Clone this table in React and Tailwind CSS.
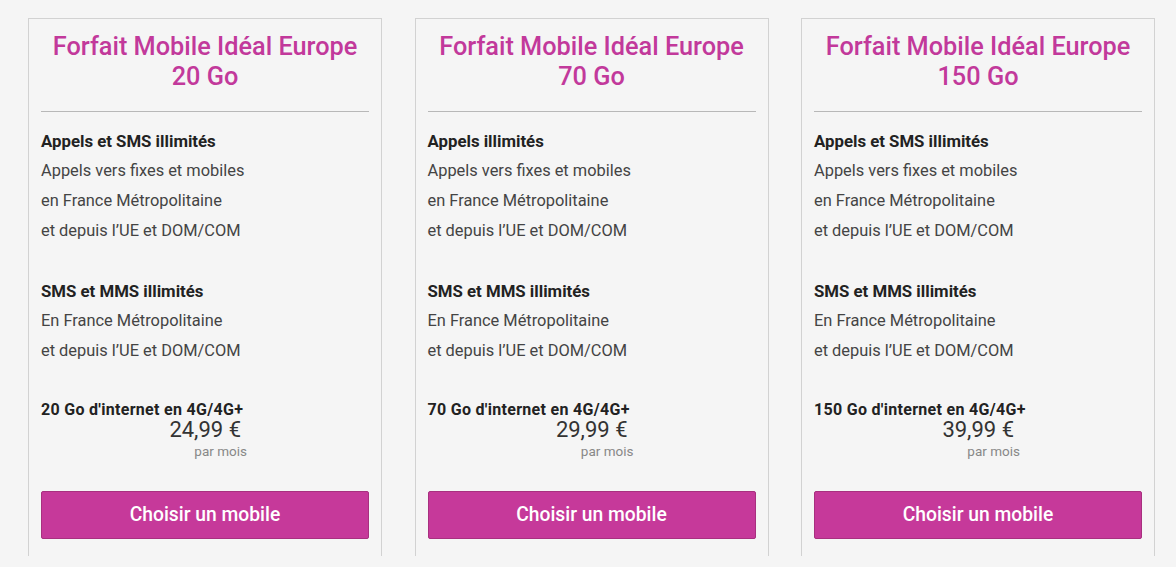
import React from 'react';

const plans = [
  {
    size: '20 Go',
    calls: 'Appels et SMS illimités',
    internet: "20 Go d'internet en 4G/4G+",
    price: '24,99 €',
  },
  {
    size: '70 Go',
    calls: 'Appels illimités',
    internet: "70 Go d'internet en 4G/4G+",
    price: '29,99 €',
  },
  {
    size: '150 Go',
    calls: 'Appels et SMS illimités',
    internet: "150 Go d'internet en 4G/4G+",
    price: '39,99 €',
  },
];

const PlanCard = ({ plan }) => (
  <div className="w-[354px] h-[538px] border border-b-0 border-[#d2d2d2] px-[12px] pt-[13px] flex flex-col">
    <h2 className="text-center text-[25.3px] leading-[30px] font-medium text-[#c2399b]">
      Forfait Mobile Idéal Europe
      <br />
      {plan.size}
    </h2>

    <hr className="mt-[19px] border-0 border-t border-[#b8b8b8]" />

    <div className="mt-[14px] text-[16.4px] leading-[30px] text-[#444]">
      <p className="font-bold text-[16.8px] text-[#222]">{plan.calls}</p>
      <p>Appels vers fixes et mobiles</p>
      <p>en France Métropolitaine</p>
      <p>et depuis l’UE et DOM/COM</p>

      <p className="mt-[30px] font-bold text-[16.8px] text-[#222]">SMS et MMS illimités</p>
      <p>En France Métropolitaine</p>
      <p>et depuis l’UE et DOM/COM</p>
    </div>

    <div className="mt-[35px] w-[206px]">
      <p className="text-[16px] tracking-[0.3px] leading-[18px] font-bold text-[#222] whitespace-nowrap">{plan.internet}</p>
      <p className="text-right pr-[6px] text-[22px] leading-[22px] text-[#333]">{plan.price}</p>
      <p className="text-right text-[13.5px] leading-[20px] text-[#888]">par mois</p>
    </div>

    <button className="mt-[30px] h-[48px] w-full rounded-[2px] border border-[#a8307f] bg-[#c6399a] text-white text-[19.3px] font-medium">
      Choisir un mobile
    </button>
  </div>
);

export default function App() {
  return (
    <div className="w-[1176px] h-[567px] overflow-hidden bg-[#f5f5f5] font-['Roboto','Liberation_Sans',sans-serif]">
      <div className="flex gap-[32.5px] pl-[28px] pt-[18px]">
        {plans.map((plan) => (
          <PlanCard key={plan.size} plan={plan} />
        ))}
      </div>
    </div>
  );
}
